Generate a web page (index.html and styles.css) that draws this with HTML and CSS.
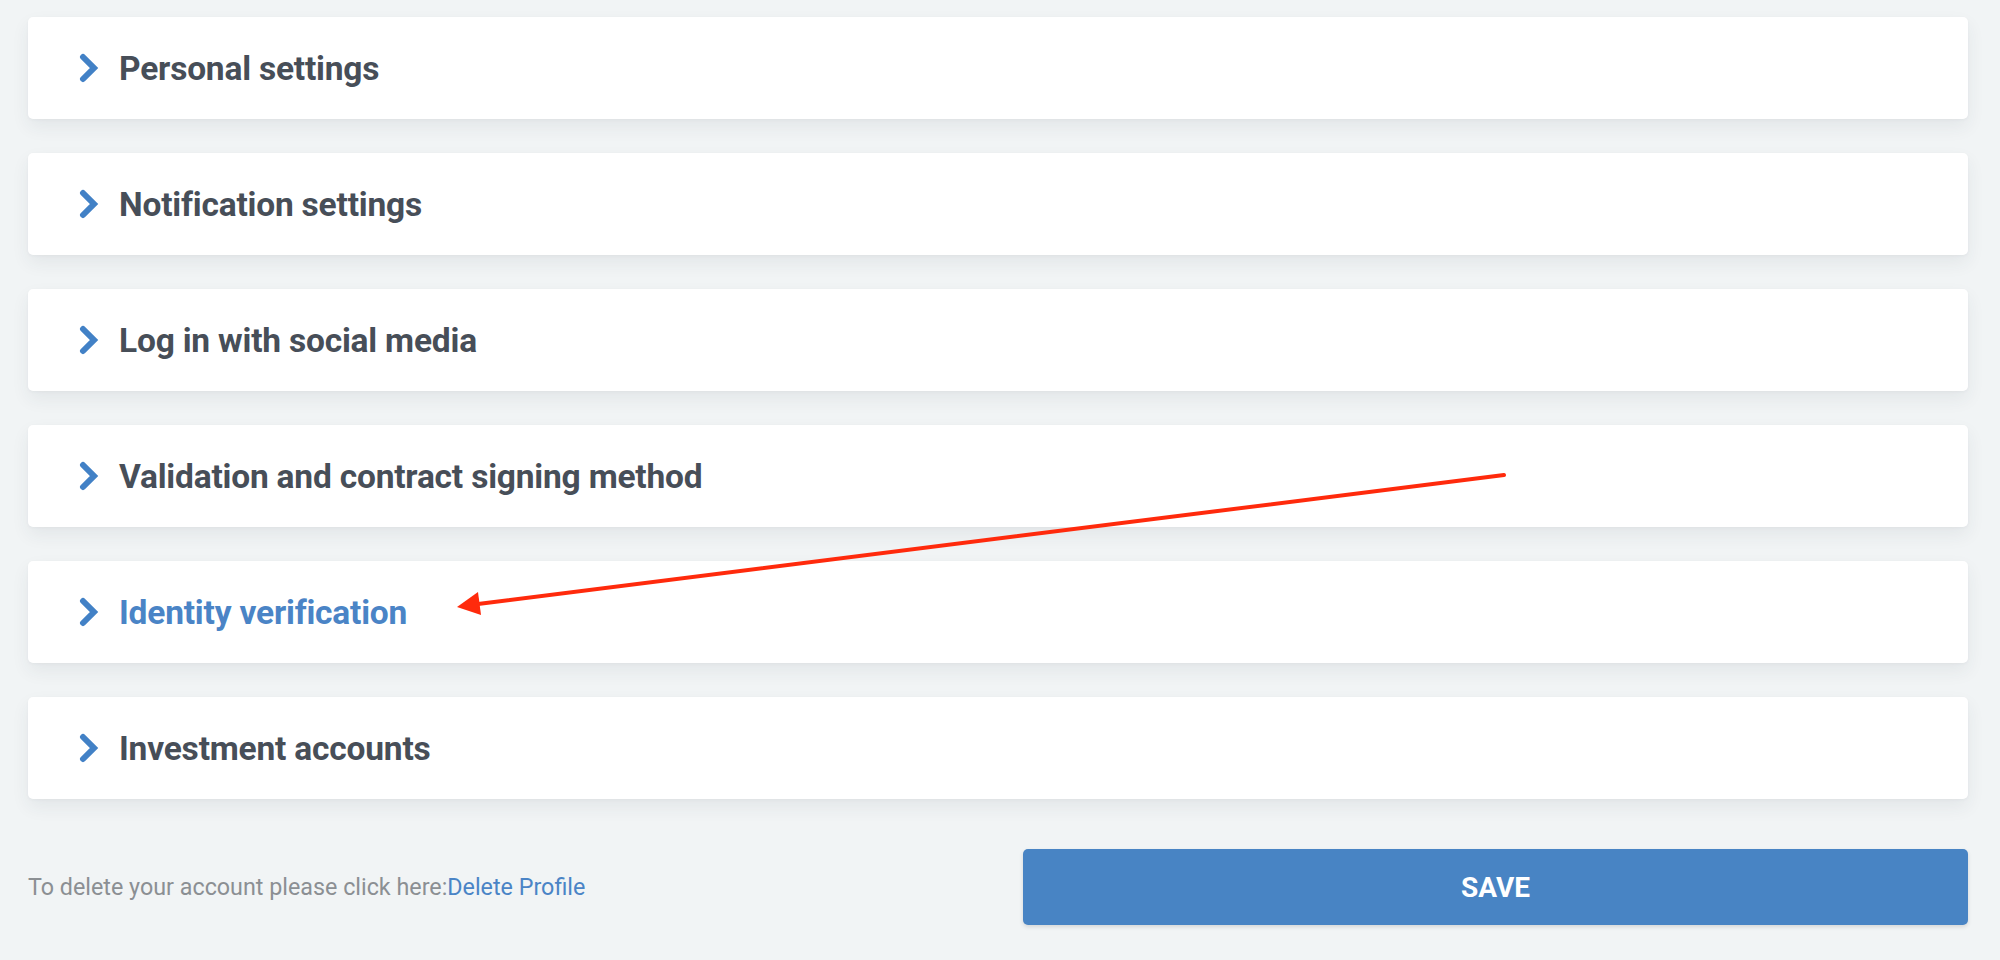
FILE: index.html
```html
<!DOCTYPE html>
<html lang="en">
<head>
<meta charset="utf-8">
<title>Settings</title>
<link rel="stylesheet" href="styles.css">
</head>
<body>
<div class="page">
  <div class="sections">
    <div class="card"><svg class="chev" viewBox="0 0 20 30"><polyline points="4,4 15,15 4,26"/></svg><span class="title">Personal settings</span></div>
    <div class="card"><svg class="chev" viewBox="0 0 20 30"><polyline points="4,4 15,15 4,26"/></svg><span class="title">Notification settings</span></div>
    <div class="card"><svg class="chev" viewBox="0 0 20 30"><polyline points="4,4 15,15 4,26"/></svg><span class="title">Log in with social media</span></div>
    <div class="card"><svg class="chev" viewBox="0 0 20 30"><polyline points="4,4 15,15 4,26"/></svg><span class="title">Validation and contract signing method</span></div>
    <div class="card"><svg class="chev" viewBox="0 0 20 30"><polyline points="4,4 15,15 4,26"/></svg><span class="title active">Identity verification</span></div>
    <div class="card"><svg class="chev" viewBox="0 0 20 30"><polyline points="4,4 15,15 4,26"/></svg><span class="title">Investment accounts</span></div>
  </div>
  <div class="footer">
    <p class="delete">To delete your account please click here:<a href="#" class="link">Delete Profile</a></p>
    <button class="save">SAVE</button>
  </div>
  <svg class="annot" width="2000" height="960" viewBox="0 0 2000 960">
    <line x1="1504" y1="475" x2="470" y2="605" stroke="#ff2a0c" stroke-width="4" stroke-linecap="round"/>
    <polygon points="457,607 478,592 481,615" fill="#ff2a0c"/>
  </svg>
</div>
</body>
</html>
```
FILE: styles.css
```css
html, body {
  margin: 0;
  padding: 0;
}
body {
  background: #f1f4f5;
  font-family: Roboto, "Liberation Sans", sans-serif;
  width: 2000px;
  height: 960px;
  overflow: hidden;
}
.page {
  position: relative;
  padding: 17px 32px 0 28px;
  height: 960px;
  box-sizing: border-box;
}
.sections {
  display: flex;
  flex-direction: column;
  gap: 34px;
}
.card {
  height: 102px;
  background: #ffffff;
  border-radius: 5px;
  box-shadow: 0 8px 18px rgba(40, 55, 70, 0.07), 0 1px 3px rgba(40, 55, 70, 0.04);
  display: flex;
  align-items: center;
  padding-left: 51px;
  box-sizing: border-box;
}
.chev {
  width: 20px;
  height: 30px;
  margin-right: 20px;
  flex: none;
}
.chev polyline {
  fill: none;
  stroke: #4281c6;
  stroke-width: 6;
  stroke-linecap: round;
  stroke-linejoin: miter;
}
.title {
  font-size: 33.5px;
  font-weight: 700;
  color: #474e58;
  letter-spacing: -0.2px;
}
.title.active {
  color: #4a84c6;
}
.footer {
  display: flex;
  align-items: center;
  justify-content: space-between;
  margin-top: 50px;
}
.delete {
  margin: 0;
  font-size: 23.3px;
  color: #8b8f93;
}
.link {
  color: #4a84c6;
  text-decoration: none;
}
.save {
  width: 945px;
  height: 76px;
  border: none;
  border-radius: 5px;
  background: #4884c4;
  color: #ffffff;
  font-family: Roboto, "Liberation Sans", sans-serif;
  font-size: 28px;
  font-weight: 700;
  box-shadow: 0 2px 4px rgba(0, 0, 0, 0.12);
}
.annot {
  position: absolute;
  left: 0;
  top: 0;
  pointer-events: none;
}
```
